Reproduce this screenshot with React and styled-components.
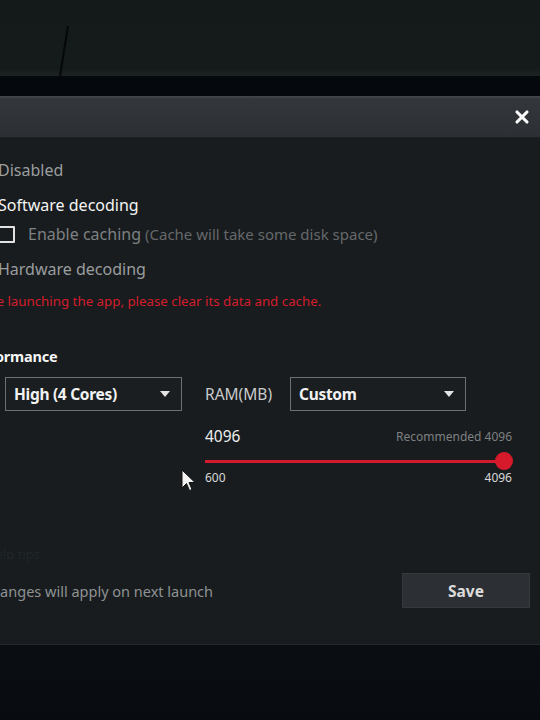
import React from 'react'
import styled, { createGlobalStyle } from 'styled-components'
import { X } from 'lucide-react'

const GlobalStyle = createGlobalStyle`
  html, body { margin: 0; padding: 0; background: #080c10; }
  body { font-family: "Noto Sans", "Open Sans", sans-serif; }
  * { box-sizing: border-box; }
`

const Page = styled.div`
  width: 540px;
  height: 720px;
  display: flex;
  flex-direction: column;
  overflow: hidden;
  position: relative;
`

const Backdrop = styled.div`
  height: 76px;
  position: relative;
  background: linear-gradient(180deg, #141a1a 0%, #151b1b 90%, #1d2222 100%);
`

const Taskbar = styled.div`
  height: 20px;
  background: #05090e;
`

const Dialog = styled.div`
  height: 549px;
  display: flex;
  flex-direction: column;
  background: #181c1e;
  border-bottom: 1px solid #22282b;
`

const TitleBar = styled.div`
  height: 42px;
  display: flex;
  justify-content: flex-end;
  align-items: center;
  background: linear-gradient(180deg, #44484e 0px, #33373c 3px, #2c3035 100%);
  border-bottom: 1px solid #1c2022;
`

const CloseButton = styled.button`
  width: 36px;
  height: 41px;
  border: none;
  padding: 0;
  display: flex;
  align-items: center;
  justify-content: center;
  background: transparent;
  color: #fafafa;
  cursor: pointer;
`

const Body = styled.div`
  flex: 1;
  overflow: hidden;
  display: flex;
  flex-direction: column;
  padding: 17px 10px 36px 0;
  position: relative;
`

const Inner = styled.div`
  margin-left: -34px;
  display: flex;
  flex-direction: column;
  flex: 1;
`

const OptionRow = styled.div`
  height: 30px;
  margin-top: ${p => p.$mt || 0}px;
  display: flex;
  align-items: center;
  gap: 9px;
  padding-left: 9px;
  font-size: 16px;
  color: ${p => (p.$active ? '#f4f4f4' : '#9b9d9f')};
`

const Radio = styled.span`
  width: 14px;
  height: 14px;
  border-radius: 50%;
  border: 1.5px solid ${p => (p.$active ? '#e8e8e8' : '#7a7d80')};
`

const CheckRow = styled.label`
  height: 28px;
  display: flex;
  align-items: center;
  padding-left: 32px;
  gap: 13px;
  font-size: 16px;
  color: #7e8183;
`

const CheckBox = styled.span`
  width: 17px;
  height: 17px;
  border: 2px solid #e2e2e2;
  border-radius: 1px;
`

const Hint = styled.span`
  font-size: 15px;
  color: #66696b;
  margin-left: -9px;
`

const Warning = styled.div`
  margin-top: 8px;
  margin-left: 3px;
  line-height: 18px;
  font-size: 13.3px;
  color: #d41c2c;
  white-space: nowrap;
`

const Heading = styled.div`
  margin-top: 36px;
  height: 20px;
  line-height: 20px;
  font-size: 14.5px;
  font-weight: 700;
  color: #f6f6f6;
  letter-spacing: -0.2px;
`

const ControlRow = styled.div`
  margin-top: 11px;
  display: flex;
  align-items: center;
  height: 34px;
`

const FieldLabel = styled.span`
  width: ${p => p.$w}px;
  font-size: 15.5px;
  color: #c9cbcc;
`

const Select = styled.div`
  width: ${p => p.$w}px;
  height: 34px;
  margin-right: ${p => p.$mr || 0}px;
  border: 1px solid #6c6f73;
  background: #1a1e20;
  display: flex;
  align-items: center;
  justify-content: space-between;
  padding: 0 11px 0 8px;
  font-size: 15.5px;
  font-weight: 700;
  color: #f2f2f2;
  letter-spacing: -0.3px;
`

const Caret = styled.span`
  width: 0;
  height: 0;
  border-left: 5px solid transparent;
  border-right: 5px solid transparent;
  border-top: 6px solid #e4e4e4;
`

const SliderBlock = styled.div`
  margin-top: 14px;
  margin-left: 239px;
  width: 307px;
  display: flex;
  flex-direction: column;
`

const SliderHead = styled.div`
  height: 22px;
  display: flex;
  justify-content: space-between;
  align-items: center;
`

const Value = styled.span`
  font-size: 15.5px;
  color: #eeeeee;
`

const Small = styled.span`
  font-size: 12px;
  color: ${p => p.$c || '#d8d8d8'};
`

const Track = styled.div`
  margin-top: 4px;
  height: 20px;
  position: relative;
  display: flex;
  align-items: center;
  padding-right: 8px;
`

const Bar = styled.div`
  flex: 1;
  height: 3px;
  background: #d11a2d;
`

const Knob = styled.span`
  position: absolute;
  right: -1px;
  top: 1px;
  width: 18px;
  height: 18px;
  border-radius: 50%;
  background: #d7192c;
`

const SliderFoot = styled.div`
  height: 14px;
  line-height: 14px;
  display: flex;
  justify-content: space-between;
`

const Footer = styled.div`
  display: flex;
  align-items: center;
  justify-content: space-between;
`

const FooterNote = styled.span`
  margin-left: 16px;
  font-size: 14.5px;
  color: #8f9294;
`

const Faint = styled.div`
  margin-top: auto;
  margin-left: 20px;
  font-size: 13px;
  color: #20272a;
  margin-bottom: 10px;
`

const SaveButton = styled.button`
  width: 128px;
  height: 35px;
  border: 1px solid #35393d;
  background: #2c3034;
  color: #dcdcdc;
  font-family: inherit;
  font-size: 15.5px;
  font-weight: 700;
  cursor: pointer;
`

const Bottom = styled.div`
  flex: 1;
  background: linear-gradient(180deg, #0a0e12 0%, #080c10 100%);
`

const Cursor = styled.svg`
  position: absolute;
  left: 181px;
  top: 469px;
`

export default function App() {
  return (
    <Page>
      <GlobalStyle />
      <Backdrop>
        <svg width="80" height="76" style={{ position: 'absolute', left: 0, top: 0 }}>
          <line x1="68" y1="26" x2="60" y2="76" stroke="#050708" strokeWidth="2" />
        </svg>
      </Backdrop>
      <Taskbar />
      <Dialog>
        <TitleBar>
          <CloseButton aria-label="Close">
            <X size={20} strokeWidth={3.8} />
          </CloseButton>
        </TitleBar>
        <Body>
          <Inner>
            <OptionRow>
              <Radio />
              Disabled
            </OptionRow>
            <OptionRow $active $mt={5}>
              <Radio $active />
              Software decoding
            </OptionRow>
            <CheckRow>
              <CheckBox />
              Enable caching <Hint>(Cache will take some disk space)</Hint>
            </CheckRow>
            <OptionRow $mt={6}>
              <Radio />
              Hardware decoding
            </OptionRow>
            <Warning>While launching the app, please clear its data and cache.</Warning>
            <Heading>Performance</Heading>
            <ControlRow>
              <FieldLabel $w={39}>CPU</FieldLabel>
              <Select $w={177} $mr={23}>
                High (4 Cores)
                <Caret />
              </Select>
              <FieldLabel $w={85}>RAM(MB)</FieldLabel>
              <Select $w={176}>
                Custom
                <Caret />
              </Select>
            </ControlRow>
            <SliderBlock>
              <SliderHead>
                <Value>4096</Value>
                <Small $c="#7d8082">Recommended 4096</Small>
              </SliderHead>
              <Track>
                <Bar />
                <Knob />
              </Track>
              <SliderFoot>
                <Small>600</Small>
                <Small>4096</Small>
              </SliderFoot>
            </SliderBlock>
            <Faint>Help tips</Faint>
            <Footer>
              <FooterNote>Changes will apply on next launch</FooterNote>
              <SaveButton>Save</SaveButton>
            </Footer>
          </Inner>
        </Body>
      </Dialog>
      <Bottom />
      <Cursor width="16" height="24" viewBox="0 0 16 24">
        <path d="M1 1 L1 19 L5.5 14.5 L8.5 21.5 L11 20.5 L8 13.5 L14 13.5 Z" fill="#f4f4f4" stroke="#111" strokeWidth="1" />
      </Cursor>
    </Page>
  )
}
